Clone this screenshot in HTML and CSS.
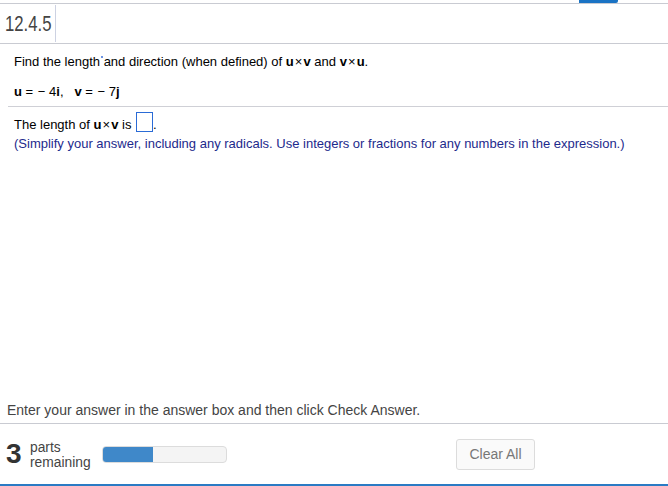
FILE: index.html
```html
<!DOCTYPE html>
<html>
<head>
<meta charset="utf-8">
<link rel="stylesheet" href="styles.css">
</head>
<body>
<div class="page">
  <div class="topbar"><span class="tab"></span></div>
  <div class="header"><div class="title"><span class="title-text">12.4.5</span></div></div>
  <div class="content">
    <p class="q">Find the length<span class="dot"></span> and direction (when defined) of <b>u</b>&#8202;×&#8202;<b>v</b> and <b>v</b>&#8202;×&#8202;<b>u</b>.</p>
    <p class="given"><b>u</b> = &#8202;− 4<b>i</b>, &nbsp;&nbsp;<b>v</b> = &#8202;− 7<b>j</b></p>
    <div class="sep"></div>
    <p class="ans">The length of <b>u</b>&#8202;×&#8202;<b>v</b> is <span class="box"></span>.</p>
    <p class="hint">(Simplify your answer, including any radicals. Use integers or fractions for any numbers in the expression.)</p>
  </div>
  <div class="instr">Enter your answer in the answer box and then click Check Answer.</div>
  <div class="footer">
    <div class="num">3</div>
    <div class="parts"><div>parts</div><div>remaining</div></div>
    <div class="bar"><div class="fill" style="width:50px"></div></div>
    <div class="btn">Clear All</div>
  </div>
</div>
</body>
</html>
```
FILE: styles.css
```css
html, body { margin: 0; padding: 0; background: #fff; }
body { font-family: "Liberation Sans", Arial, sans-serif; color: #000; }
.page { width: 668px; height: 486px; display: flex; flex-direction: column; overflow: hidden; }
.topbar { height: 3px; border-bottom: 1px solid #c9cbd2; display: flex; }
.tab { display: block; width: 39px; height: 3px; margin-left: 579px; background: #1a73c4; border-radius: 0 0 2px 0; }
.header { height: 39px; border-bottom: 1px solid #c9cbd2; display: flex; align-items: center; }
.title { height: 37px; box-sizing: border-box; padding-left: 5px; width: 56px; border-right: 1px solid #cdd2e2; display: flex; align-items: center; overflow: hidden; }
.title-text { display: inline-block; font-size: 22px; color: #444; transform: scaleX(0.76); transform-origin: 0 50%; white-space: nowrap; }
.content { flex: 1; padding-top: 10px; }
.content p { margin: 0; font-size: 13px; line-height: 16px; padding-left: 14px; }
.dot { position: relative; display: inline-block; width: 0; height: 0; }
.dot::after { content: ""; position: absolute; left: 1px; top: -10px; width: 2px; height: 2px; border-radius: 1px; background: #3a6fd8; }
.content p.given { margin-top: 14px; }
.sep { height: 1px; background: #cfd0d6; margin: 6px 0 0 8px; }
.content p.ans { margin-top: 5px; }
.box { display: inline-block; width: 15px; height: 18px; border: 1px solid #2a6bd6; vertical-align: -3px; margin-left: 1px; }
.content p.hint { color: #1d2a8c; line-height: 16px; margin-top: 3px; }
.instr { font-size: 14px; line-height: 16px; color: #444; padding-left: 7px; margin-bottom: 5px; }
.footer { height: 60px; border-top: 1px solid #c9cbd2; border-bottom: 2px solid #2a7bc4; display: flex; align-items: center; }
.num { font-weight: bold; font-size: 28px; color: #333; margin-left: 6px; width: 16px; line-height: 28px; }
.parts { width: 62px; font-size: 13.8px; line-height: 15px; color: #444; margin-left: 8px; padding-top: 2px; }
.bar { width: 123px; height: 15px; margin-left: 10px; border: 1px solid #dcdcdc; border-radius: 4px; background: #f4f4f4; overflow: hidden; }
.fill { height: 100%; background: #3f88c9; }
.btn { margin-left: 229px; width: 77px; height: 29px; border: 1px solid #dcdcdc; border-radius: 3px; background: #fafafa; color: #777; font-size: 14px; display: flex; align-items: center; justify-content: center; }
```
